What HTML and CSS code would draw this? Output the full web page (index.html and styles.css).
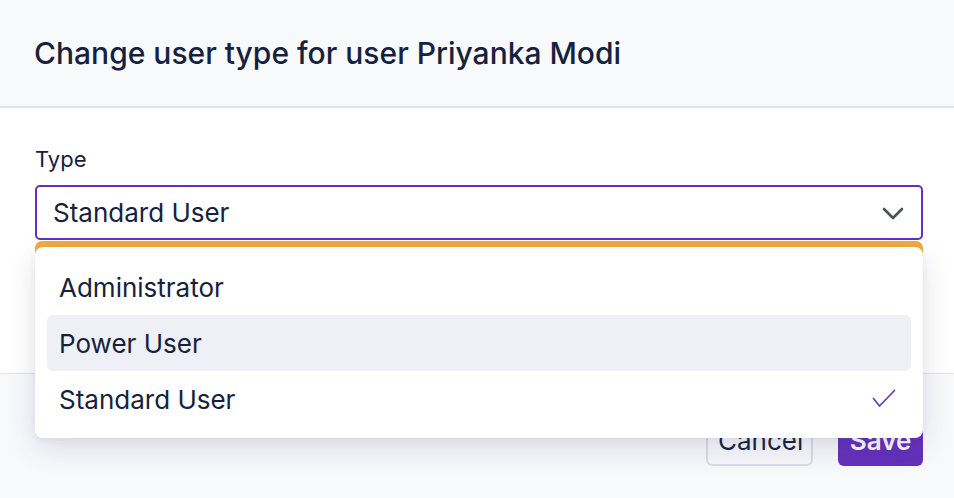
FILE: index.html
```html
<!DOCTYPE html>
<html lang="en">
<head>
<meta charset="utf-8">
<title>Change user type</title>
<link rel="stylesheet" href="styles.css">
</head>
<body>
<div class="modal">
  <header class="modal-header">
    <h1 class="modal-title">Change user type for user Priyanka Modi</h1>
  </header>
  <section class="modal-body">
    <label class="field-label">Type</label>
    <div class="field">
      <div class="select">
        <span class="select-value">Standard User</span>
        <svg class="chevron" viewBox="0 0 22 13" width="22" height="13" aria-hidden="true"><polyline points="2,2 11,11 20,2" fill="none" stroke="#4a505d" stroke-width="2.6" stroke-linecap="round" stroke-linejoin="round"/></svg>
      </div>
      <div class="menu">
        <div class="option">Administrator</div>
        <div class="option option-active">Power User</div>
        <div class="option">Standard User
          <svg class="check" viewBox="0 0 24 20" width="24" height="20" aria-hidden="true"><polyline points="1.5,9.5 7.5,17 22.5,1.5" fill="none" stroke="#6a36c4" stroke-width="1.7" stroke-linecap="round" stroke-linejoin="round"/></svg>
        </div>
      </div>
    </div>
    <div class="alert"></div>
  </section>
  <footer class="modal-footer">
    <button class="btn btn-secondary">Cancel</button>
    <button class="btn btn-primary">Save</button>
  </footer>
</div>
</body>
</html>
```
FILE: styles.css
```css
* { box-sizing: border-box; }
html, body { margin: 0; padding: 0; }
body {
  font-family: Inter, "Noto Sans", sans-serif;
  color: #15223d;
  background: #f8f9fb;
  width: 954px;
  height: 498px;
  overflow: hidden;
}
.modal { display: flex; flex-direction: column; }
.modal-header {
  height: 108px;
  background: #f8f9fb;
  border-bottom: 2px solid #dfe2ea;
  display: flex;
  align-items: center;
  padding: 0 34px;
}
.modal-title {
  margin: 0;
  font-size: 30px;
  font-weight: 500;
  line-height: 36px;
  color: #15223d;
}
.modal-body {
  background: #ffffff;
  padding: 37px 31px 40px 35px;
  height: 266px;
  border-bottom: 1px solid #dfe2ea;
}
.field-label {
  display: block;
  font-size: 22px;
  line-height: 28px;
  margin-bottom: 12px;
  color: #15223d;
}
.field { position: relative; z-index: 2; }
.select {
  height: 55px;
  border: 2px solid #6331c2;
  border-radius: 5px;
  background: #fff;
  display: flex;
  align-items: center;
  justify-content: space-between;
  padding: 0 17px 0 16px;
}
.select-value { font-size: 26px; color: #15223d; }
.chevron { display: block; margin-top: 1px; }
.alert {
  margin-top: 1px;
  height: 80px;
  background: #f2ab3e;
  border-radius: 7px;
}
.menu {
  position: absolute;
  top: calc(100% + 7px);
  left: 0;
  right: 0;
  background: #fff;
  border-radius: 8px;
  padding: 12px 12px 11px;
  box-shadow: 0 10px 28px rgba(70, 60, 120, 0.16), 0 2px 6px rgba(70, 60, 120, 0.06);
}
.option {
  height: 56px;
  display: flex;
  align-items: center;
  justify-content: space-between;
  padding: 0 15px 0 12px;
  border-radius: 6px;
  font-size: 26px;
  color: #15223d;
}
.option-active { background: #eef0f5; }
.check { display: block; }
.modal-footer {
  background: #f8f9fb;
  padding: 40px 31px 0 35px;
  display: flex;
  justify-content: flex-end;
  gap: 25px;
  flex: 1;
}
.btn {
  height: 52px;
  border-radius: 6px;
  font-family: inherit;
  font-size: 26px;
  padding: 0 10px;
  cursor: pointer;
}
.btn-secondary {
  width: 107px;
  background: linear-gradient(#ffffff, #f6f7fa);
  border: 2px solid #d9dce6;
  color: #15223d;
}
.btn-primary {
  width: 85px;
  background: #6330ba;
  border: none;
  color: #fff;
  font-weight: 600;
}
```
